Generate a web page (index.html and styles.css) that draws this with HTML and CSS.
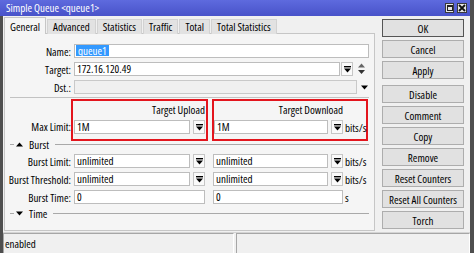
FILE: index.html
```html
<!DOCTYPE html>
<html>
<head>
<meta charset="utf-8">
<title>Simple Queue</title>
<link rel="stylesheet" href="styles.css">
</head>
<body>
<div class="window">
  <div class="titlebar">
    <span class="title">Simple Queue &lt;queue1&gt;</span>
    <span class="wbtns">
      <span class="wbtn max"><span class="maxbox"></span></span>
      <span class="wbtn close"><svg width="8" height="8" viewBox="0 0 8 8"><path d="M1 1L7 7M7 1L1 7" stroke="#111" stroke-width="1.8"/></svg></span>
    </span>
  </div>
  <div class="content">
    <div class="top">
      <div class="main">
        <div class="tabs">
          <div class="tab active">General</div>
          <div class="tab">Advanced</div>
          <div class="tab">Statistics</div>
          <div class="tab">Traffic</div>
          <div class="tab">Total</div>
          <div class="tab">Total Statistics</div>
        </div>
        <div class="panel">
          <div class="row first">
            <div class="lbl">Name:</div>
            <div class="inp name"><span class="sel">queue1</span></div>
          </div>
          <div class="row">
            <div class="lbl">Target:</div>
            <div class="inp target">172.16.120.49</div>
            <span class="dd tgt"><svg width="7" height="7" viewBox="0 0 7 7"><rect x="0" y="0" width="7" height="1.4"/><path d="M0 2.4H7L3.5 6.6Z"/></svg></span>
            <span class="updown"><svg width="7" height="12" viewBox="0 0 7 12"><path d="M3.5 0.5L7 4.5H0Z" fill="#666"/><path d="M0 7H7L3.5 11Z" fill="#333"/></svg></span>
          </div>
          <div class="row">
            <div class="lbl">Dst.:</div>
            <div class="inp dst"></div>
            <span class="darrow"><svg width="7" height="5" viewBox="0 0 7 5"><path d="M0 0.5H7L3.5 4.5Z"/></svg></span>
          </div>
          <div class="sep"></div>
          <div class="maxrow">
            <div class="maxlbl">Max Limit:</div>
            <div class="redbox up">
              <div class="cap">Target Upload</div>
              <div class="pair">
                <div class="inp c1">1M</div>
                <span class="dd"><svg width="7" height="7" viewBox="0 0 7 7"><rect x="0" y="0" width="7" height="1.4"/><path d="M0 2.4H7L3.5 6.6Z"/></svg></span>
              </div>
            </div>
            <div class="redbox down">
              <div class="cap">Target Download</div>
              <div class="pair">
                <div class="inp c2m">1M</div>
                <span class="dd"><svg width="7" height="7" viewBox="0 0 7 7"><rect x="0" y="0" width="7" height="1.4"/><path d="M0 2.4H7L3.5 6.6Z"/></svg></span>
                <span class="unit">bits/s</span>
              </div>
            </div>
          </div>
          <div class="sec burst">
            <span class="l1"></span>
            <svg class="tri" width="7" height="5" viewBox="0 0 7 5"><path d="M3.5 0.5L7 4.5H0Z"/></svg>
            <span class="stxt">Burst</span>
            <span class="l2"></span>
          </div>
          <div class="row brow1">
            <div class="lbl">Burst Limit:</div>
            <div class="inp c1">unlimited</div>
            <span class="dd"><svg width="7" height="7" viewBox="0 0 7 7"><rect x="0" y="0" width="7" height="1.4"/><path d="M0 2.4H7L3.5 6.6Z"/></svg></span>
            <div class="inp c2">unlimited</div>
            <span class="dd"><svg width="7" height="7" viewBox="0 0 7 7"><rect x="0" y="0" width="7" height="1.4"/><path d="M0 2.4H7L3.5 6.6Z"/></svg></span>
            <span class="unit">bits/s</span>
          </div>
          <div class="row">
            <div class="lbl">Burst Threshold:</div>
            <div class="inp c1">unlimited</div>
            <span class="dd"><svg width="7" height="7" viewBox="0 0 7 7"><rect x="0" y="0" width="7" height="1.4"/><path d="M0 2.4H7L3.5 6.6Z"/></svg></span>
            <div class="inp c2">unlimited</div>
            <span class="dd"><svg width="7" height="7" viewBox="0 0 7 7"><rect x="0" y="0" width="7" height="1.4"/><path d="M0 2.4H7L3.5 6.6Z"/></svg></span>
            <span class="unit">bits/s</span>
          </div>
          <div class="row">
            <div class="lbl">Burst Time:</div>
            <div class="inp t1">0</div>
            <div class="inp t2">0</div>
            <span class="unit">s</span>
          </div>
          <div class="sec time">
            <span class="l1"></span>
            <svg class="tri" width="7" height="5" viewBox="0 0 7 5"><path d="M0 0.5H7L3.5 4.5Z"/></svg>
            <span class="stxt">Time</span>
            <span class="l2"></span>
          </div>
        </div>
      </div>
      <div class="btns">
        <div class="btn ok">OK</div>
        <div class="btn">Cancel</div>
        <div class="btn spaced">Apply</div>
        <div class="btn">Disable</div>
        <div class="btn">Comment</div>
        <div class="btn">Copy</div>
        <div class="btn">Remove</div>
        <div class="btn">Reset Counters</div>
        <div class="btn">Reset All Counters</div>
        <div class="btn">Torch</div>
      </div>
    </div>
    <div class="status">
      <div class="cell c-first">enabled</div>
      <div class="cell c-second"></div>
    </div>
  </div>
</div>
</body>
</html>
```

FILE: styles.css
```css
* { box-sizing: border-box; }
html, body { margin: 0; padding: 0; }
body {
  width: 474px;
  height: 253px;
  overflow: hidden;
  background: #4f4f4f;
  font-family: "Open Sans", "Liberation Sans", Arial, sans-serif;
  font-stretch: 78%;
  font-size: 11px;
  color: #000;
}
.window {
  width: 474px;
  height: 253px;
  display: flex;
  flex-direction: column;
  background: #4f4f4f;
  padding-right: 4px;
}
.titlebar {
  height: 16px;
  flex: none;
  display: flex;
  align-items: center;
  justify-content: space-between;
  background: linear-gradient(#5e6ade, #4852c9);
  color: #fff;
  padding: 0 3px 0 6px;
}
.title { line-height: 16px; white-space: nowrap; }
.wbtns { display: flex; align-items: center; gap: 3px; }
.wbtn {
  height: 10px;
  background: #e6e6e6;
  border: 1px solid #3a3a3a;
  display: flex;
  align-items: center;
  justify-content: center;
}
.wbtn.max { width: 9px; }
.wbtn.close { width: 10px; }
.maxbox {
  width: 6px;
  height: 6px;
  border: 1px solid #222;
  border-top-width: 2px;
}
.content {
  flex: 1;
  margin-left: 3px;
  background: #f0f0f0;
  display: flex;
  flex-direction: column;
}
.top { flex: 1; display: flex; }
.main {
  width: 372px;
  display: flex;
  flex-direction: column;
  padding: 1px 0 1px 1px;
}
.tabs {
  display: flex;
  align-items: flex-end;
  height: 17px;
  margin-bottom: -1px;
  position: relative;
  z-index: 1;
}
.tab {
  height: 15px;
  padding: 0 5px;
  margin-right: 1px;
  background: #e2e2e2;
  border: 1px solid #d2d2d2;
  border-bottom: none;
  line-height: 14px;
  white-space: nowrap;
}
.tab.active {
  height: 17px;
  background: #f5f5f5;
  border-color: #c6c6c6;
  line-height: 17px;
  padding: 0 5px;
}
.panel {
  flex: 1;
  border: 1px solid #c6c6c6;
  background: #f5f5f5;
  display: flex;
  flex-direction: column;
}
.row {
  display: flex;
  align-items: center;
  height: 14px;
  margin-top: 4px;
  flex: none;
}
.row.first { margin-top: 10px; }
.row.brow1 { margin-top: 7px; }
.lbl {
  width: 69px;
  flex: none;
  text-align: right;
  padding-right: 3px;
  white-space: nowrap;
}
.inp {
  height: 14px;
  flex: none;
  background: #fff;
  border: 1px solid #bdbdbd;
  padding-left: 2px;
  line-height: 12px;
  white-space: nowrap;
  overflow: hidden;
}
.inp.name { width: 295px; padding-left: 1px; }
.sel {
  display: inline-block;
  height: 11px;
  line-height: 11px;
  padding: 0 2px;
  background: #3399ff;
  color: #fff;
  vertical-align: top;
}
.inp.target { width: 266px; }
.inp.dst { width: 283px; background: #f0f0f0; border-color: #c9c9c9; }
.dd {
  width: 12px;
  height: 14px;
  flex: none;
  border: 1px solid #c6c6c6;
  background: #fafafa;
  display: flex;
  align-items: center;
  justify-content: center;
  margin-left: 3px;
}
.dd.tgt { margin-left: 1px; }
.updown { margin-left: 5px; display: flex; align-items: center; }
.darrow { margin-left: 4px; display: flex; align-items: center; }
.sep {
  height: 1px;
  background: #c2c2c2;
  margin: 3px 5px 0 5px;
  flex: none;
}
.maxrow {
  display: flex;
  height: 42px;
  margin-top: 1px;
  flex: none;
}
.maxlbl {
  width: 66px;
  height: 14px;
  margin-top: 21px;
  line-height: 14px;
  text-align: right;
  white-space: nowrap;
  flex: none;
}
.redbox {
  height: 42px;
  border: 2px solid #e3151d;
  display: flex;
  flex-direction: column;
  flex: none;
}
.redbox.up { width: 137px; }
.redbox.down { width: 156px; margin-left: 4px; }
.cap {
  height: 14px;
  line-height: 14px;
  margin-top: 2px;
  text-align: right;
  white-space: nowrap;
}
.up .cap { width: 132px; }
.down .cap { width: 129px; }
.pair {
  display: flex;
  align-items: center;
  height: 14px;
  margin-top: 3px;
}
.up .pair { padding-left: 1px; }
.inp.c1 { width: 116px; }
.inp.c2m { width: 114px; }
.inp.c2 { width: 115px; margin-left: 8px; }
.inp.t1 { width: 131px; }
.inp.t2 { width: 130px; margin-left: 8px; }
.unit { margin-left: 2px; white-space: nowrap; }
.sec {
  display: flex;
  align-items: center;
  margin: 0 5px 0 5px;
  flex: none;
}
.sec.burst { height: 6px; }
.sec.time { height: 10px; margin-top: 4px; }
.l1 { width: 4px; height: 1px; background: #a9a9a9; flex: none; }
.tri { margin-left: 2px; flex: none; }
.stxt { margin-left: 6px; white-space: nowrap; }
.l2 { flex: 1; height: 1px; background: #a9a9a9; margin-left: 6px; }
.btns {
  width: 82px;
  margin-left: 7px;
  padding-top: 3px;
  display: flex;
  flex-direction: column;
  flex: none;
}
.btn {
  height: 18px;
  margin-bottom: 3px;
  border: 1px solid #adadad;
  background: #e1e1e1;
  display: flex;
  align-items: center;
  justify-content: center;
  white-space: nowrap;
  flex: none;
}
.btn.ok { border-color: #555; }
.btn.spaced { margin-bottom: 6px; }
.status {
  height: 21px;
  flex: none;
  display: flex;
  border-top: 1px solid #d4d4d4;
}
.cell {
  height: 20px;
  border-top: 1px solid #a6a6a6;
  border-left: 1px solid #a6a6a6;
  border-right: 1px solid #ffffff;
  display: flex;
  align-items: center;
  padding-left: 1px;
  white-space: nowrap;
}
.c-first { width: 231px; }
.c-second { flex: 1; margin-left: 2px; }
```
